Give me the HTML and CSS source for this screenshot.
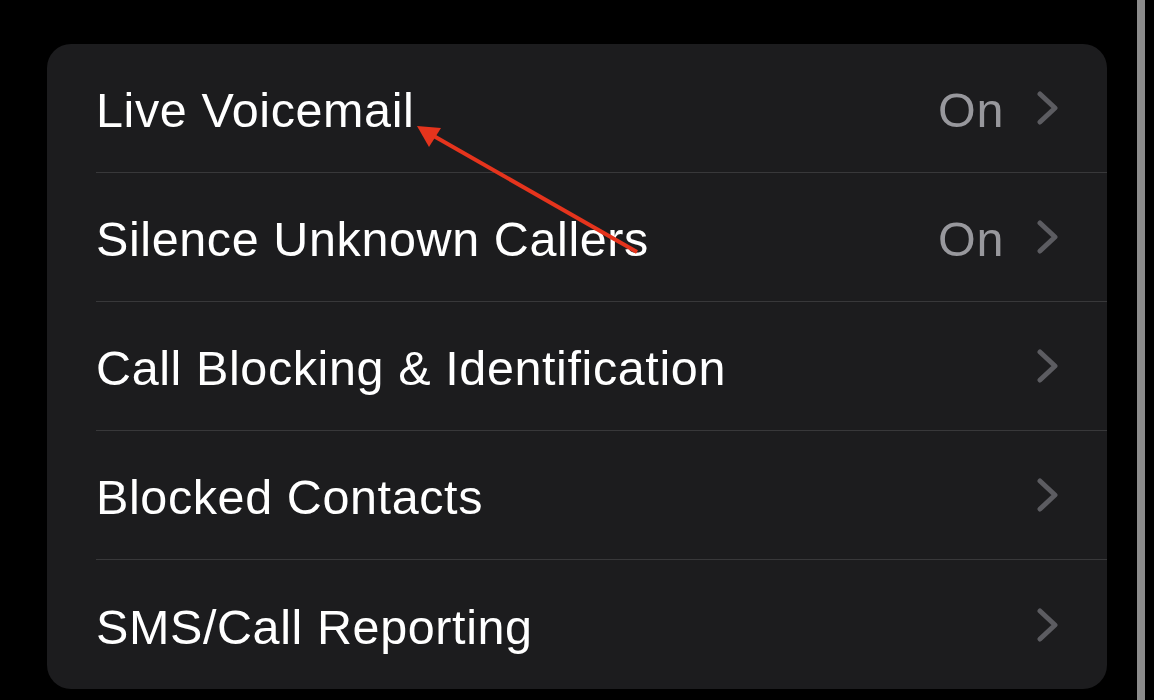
FILE: index.html
```html
<!DOCTYPE html>
<html>
<head>
<meta charset="utf-8">
<link rel="stylesheet" href="styles.css">
</head>
<body>
<div class="page">
  <div class="card">
    <div class="row">
      <span class="label">Live Voicemail</span>
      <span class="value">On</span>
      <svg class="chev" viewBox="0 0 22 34"><path d="M3 3 L18 17 L3 31"/></svg>
    </div>
    <div class="row">
      <span class="label">Silence Unknown Callers</span>
      <span class="value">On</span>
      <svg class="chev" viewBox="0 0 22 34"><path d="M3 3 L18 17 L3 31"/></svg>
    </div>
    <div class="row">
      <span class="label">Call Blocking &amp; Identification</span>
      <svg class="chev" viewBox="0 0 22 34"><path d="M3 3 L18 17 L3 31"/></svg>
    </div>
    <div class="row">
      <span class="label">Blocked Contacts</span>
      <svg class="chev" viewBox="0 0 22 34"><path d="M3 3 L18 17 L3 31"/></svg>
    </div>
    <div class="row">
      <span class="label">SMS/Call Reporting</span>
      <svg class="chev" viewBox="0 0 22 34"><path d="M3 3 L18 17 L3 31"/></svg>
    </div>
  </div>
  <div class="scrollbar"></div>
  <svg class="arrow" viewBox="0 0 1154 700" width="1154" height="700">
    <line x1="637" y1="252" x2="432" y2="135"/>
    <polygon points="417,126 441,128 429,147"/>
  </svg>
</div>
</body>
</html>
```
FILE: styles.css
```css
html, body {
  margin: 0;
  padding: 0;
  background: #000;
}
.page {
  position: relative;
  width: 1154px;
  height: 700px;
  display: flex;
  gap: 30px;
  padding-left: 47px;
  box-sizing: border-box;
  overflow: hidden;
  font-family: "Liberation Sans", Arial, sans-serif;
}
.card {
  margin-top: 44px;
  width: 1060px;
  height: 645px;
  background: #1c1c1e;
  border-radius: 24px;
  padding-left: 49px;
  box-sizing: border-box;
  display: flex;
  flex-direction: column;
}
.row {
  height: 129px;
  display: flex;
  align-items: center;
  padding-right: 48px;
  border-bottom: 1px solid #38383a;
  box-sizing: border-box;
}
.row:last-child {
  border-bottom: none;
}
.label {
  flex: 1;
  color: #fff;
  font-size: 48.5px;
  letter-spacing: 0.6px;
  padding-top: 4px;
}
.value {
  color: #98989d;
  font-size: 48.5px;
  letter-spacing: 0.6px;
  margin-right: 33px;
  padding-top: 4px;
}
.chev {
  width: 22px;
  height: 34px;
  fill: none;
  stroke: #5c5c61;
  stroke-width: 5;
  stroke-linecap: round;
  stroke-linejoin: round;
}
.scrollbar {
  width: 8px;
  height: 700px;
  background: #8c8c8c;
}
.arrow {
  position: absolute;
  left: 0;
  top: 0;
}
.arrow line {
  stroke: #e5341d;
  stroke-width: 4;
}
.arrow polygon {
  fill: #e5341d;
}
```
